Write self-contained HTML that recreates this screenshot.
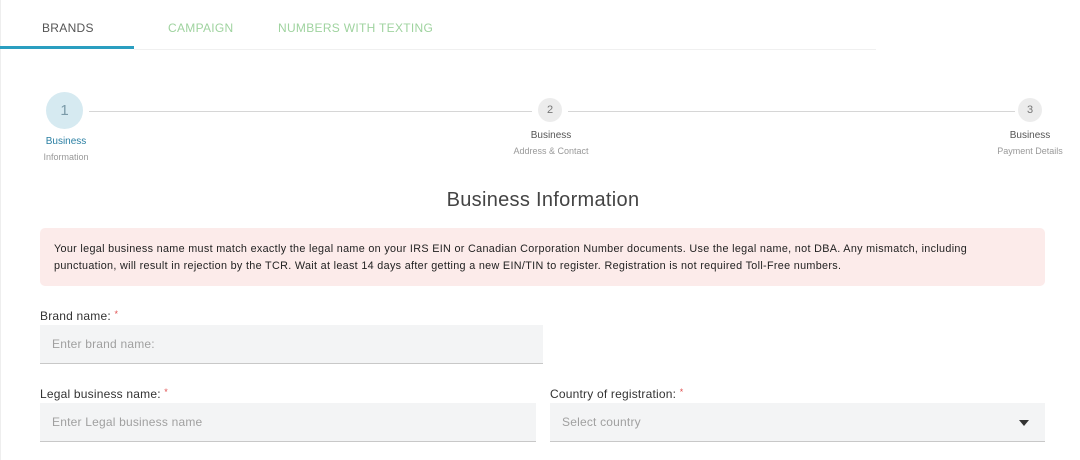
<!DOCTYPE html>
<html><head><style>
*{margin:0;padding:0;box-sizing:border-box}
body{width:1080px;height:460px;background:#fff;font-family:"Liberation Sans",sans-serif;position:relative;overflow:hidden;color:#333}
.a{position:absolute;white-space:nowrap}
.tab{font-size:12px;top:21px;letter-spacing:0.3px}
.c{position:absolute;border-radius:50%;text-align:center;color:#777}
.line{position:absolute;height:1px;background:#d6d6d6;top:111px}
.lb{font-size:10px;color:#555;text-align:center;transform:translateX(-50%)}
.sb{font-size:9px;color:#999;text-align:center;transform:translateX(-50%)}
.inp{position:absolute;background:#f3f4f5;border-bottom:1px solid #c8c8c8;font-size:12px;color:#a0a0a0;padding-left:12px;display:flex;align-items:center;letter-spacing:0.2px}
.lab{font-size:12px;color:#333;letter-spacing:0.2px}
.lab span{color:#e05050;font-size:9px;vertical-align:top}
</style></head><body>
<div class="a" style="left:0;top:0;width:1px;height:460px;background:#eee"></div>
<div class="a tab" style="left:42px;color:#555">BRANDS</div>
<div class="a tab" style="left:168px;color:#9fd39f">CAMPAIGN</div>
<div class="a tab" style="left:278px;color:#9fd39f">NUMBERS WITH TEXTING</div>
<div class="a" style="left:0;top:46px;width:134px;height:3px;background:#2a9ec0"></div>
<div class="a" style="left:134px;top:49px;width:742px;height:1px;background:#f0f0f0"></div>

<div class="line" style="left:89px;width:443px"></div>
<div class="line" style="left:568px;width:447px"></div>
<div class="c" style="left:46px;top:92px;width:37px;height:37px;background:#d6eaf1;line-height:37px;font-size:15px;color:#7a9aa8">1</div>
<div class="c" style="left:538px;top:98px;width:24px;height:24px;background:#ececec;line-height:24px;font-size:11px">2</div>
<div class="c" style="left:1018px;top:98px;width:24px;height:24px;background:#ececec;line-height:24px;font-size:11px">3</div>
<div class="a lb" style="left:66px;top:136px;color:#2a7fa3">Business</div>
<div class="a sb" style="left:66px;top:152px">Information</div>
<div class="a lb" style="left:551px;top:130px">Business</div>
<div class="a sb" style="left:551px;top:146px">Address &amp; Contact</div>
<div class="a lb" style="left:1030px;top:130px">Business</div>
<div class="a sb" style="left:1030px;top:146px">Payment Details</div>

<div class="a" style="left:0;width:1086px;text-align:center;top:189px;font-size:20px;color:#444;letter-spacing:0.3px">Business Information</div>

<div class="a" style="left:40px;top:228px;width:1005px;height:58px;background:#fcebea;border-radius:5px;padding:13px 14px;font-size:10.8px;line-height:17px;color:#222;letter-spacing:0.32px">Your legal business name must match exactly the legal name on your IRS EIN or Canadian Corporation Number documents. Use the legal name, not DBA. Any mismatch, including<br>punctuation, will result in rejection by the TCR. Wait at least 14 days after getting a new EIN/TIN to register. Registration is not required Toll-Free numbers.</div>

<div class="a lab" style="left:40px;top:309px">Brand name: <span>*</span></div>
<div class="inp" style="left:40px;top:325px;width:503px;height:39px">Enter brand name:</div>
<div class="a lab" style="left:40px;top:387px">Legal business name: <span>*</span></div>
<div class="inp" style="left:40px;top:403px;width:496px;height:39px">Enter Legal business name</div>
<div class="a lab" style="left:550px;top:387px">Country of registration: <span>*</span></div>
<div class="inp" style="left:550px;top:403px;width:495px;height:39px">Select country
<svg style="position:absolute;right:16px;top:17px" width="10" height="6"><path d="M0 0H10L5 6Z" fill="#333"/></svg></div>
</body></html>
